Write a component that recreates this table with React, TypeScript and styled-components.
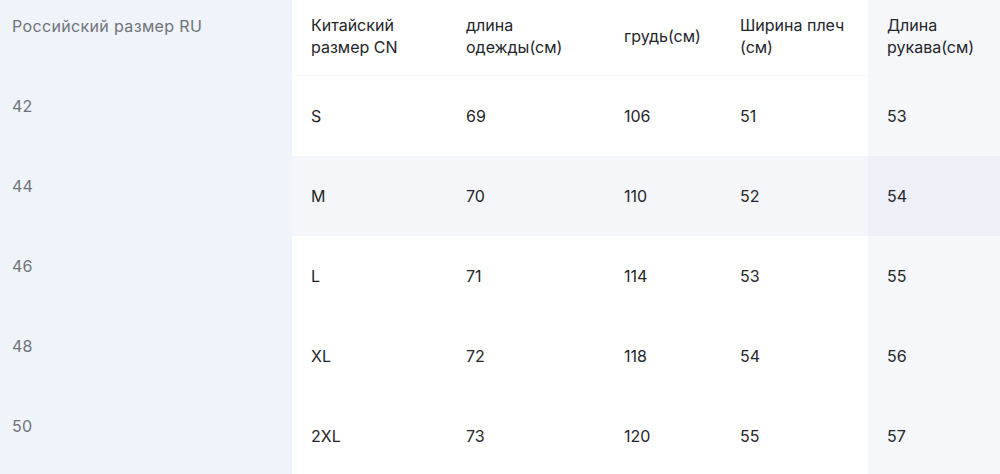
import styled, { createGlobalStyle } from "styled-components";

const GlobalStyle = createGlobalStyle`
  html, body {
    margin: 0;
    padding: 0;
    background: #ffffff;
  }
  body {
    font-family: Inter, "Noto Sans", sans-serif;
    -webkit-font-smoothing: antialiased;
  }
`;

const Page = styled.div`
  display: flex;
  width: 1000px;
  height: 474px;
  overflow: hidden;
`;

const RuColumn = styled.div`
  width: 292px;
  flex-shrink: 0;
  background: #eff3fa;
  padding: 15px 12px 0;
  box-sizing: border-box;
  display: flex;
  flex-direction: column;
`;

const RuCell = styled.div<{ $head?: boolean }>`
  height: 80px;
  flex-shrink: 0;
  font-size: 16px;
  line-height: 22px;
  letter-spacing: ${({ $head }) => ($head ? "0.35px" : "0.2px")};
  color: #6f7379;
`;

const Table = styled.div`
  flex: 1;
  display: grid;
  grid-template-columns: 155px 158px 116px 147px 132px;
  grid-template-rows: 76px repeat(5, 80px);
`;

const Cell = styled.div<{ $head?: boolean; $shade?: boolean; $side?: boolean }>`
  display: flex;
  align-items: center;
  padding: ${({ $head }) => ($head ? "0 19px 3px" : "0 19px")};
  font-size: 16px;
  line-height: 22px;
  color: #23252a;
  background: ${({ $shade, $side }) =>
    $shade && $side ? "#edf0f7" : $shade ? "#f5f6f9" : $side ? "#f5f7fa" : "#ffffff"};
  border-bottom: ${({ $head }) => ($head ? "1px solid #f6f7f9" : "none")};
  box-sizing: border-box;
`;

const headers = [
  "Китайский размер CN",
  "длина одежды(см)",
  "грудь(см)",
  "Ширина плеч (см)",
  "Длина рукава(см)",
];

const rows = [
  { ru: "42", cells: ["S", "69", "106", "51", "53"] },
  { ru: "44", cells: ["M", "70", "110", "52", "54"] },
  { ru: "46", cells: ["L", "71", "114", "53", "55"] },
  { ru: "48", cells: ["XL", "72", "118", "54", "56"] },
  { ru: "50", cells: ["2XL", "73", "120", "55", "57"] },
];

export default function App() {
  return (
    <>
      <GlobalStyle />
      <Page>
        <RuColumn>
          <RuCell $head>Российский размер RU</RuCell>
          {rows.map((r) => (
            <RuCell key={r.ru}>{r.ru}</RuCell>
          ))}
        </RuColumn>
        <Table>
          {headers.map((h, i) => (
            <Cell key={h} $head $side={i === 4}>
              {h}
            </Cell>
          ))}
          {rows.map((r, ri) =>
            r.cells.map((c, ci) => (
              <Cell key={`${ri}-${ci}`} $shade={ri === 1} $side={ci === 4}>
                {c}
              </Cell>
            ))
          )}
        </Table>
      </Page>
    </>
  );
}
